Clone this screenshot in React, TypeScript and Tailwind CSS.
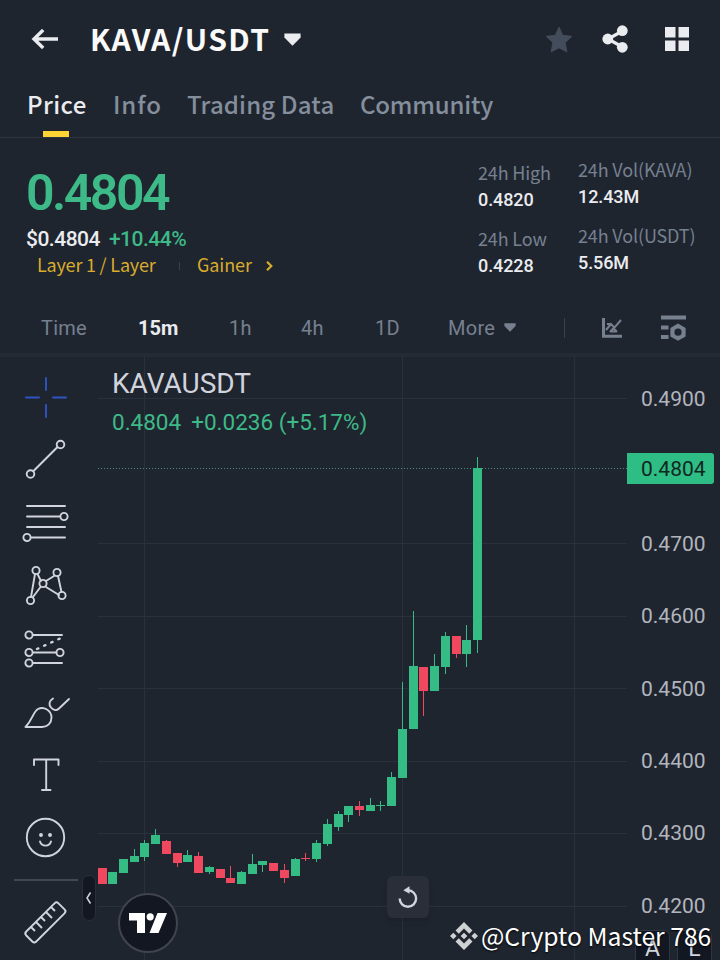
import clsx from "clsx";
import type { ReactNode } from "react";

type Candle = {
  up: boolean;
  high: number;
  top: number;
  bottom: number;
  low: number;
};

const c = (up: boolean, high: number, top: number, bottom: number, low: number): Candle => ({
  up,
  high,
  top,
  bottom,
  low,
});

const CANDLES: Candle[] = [
  c(false, 868, 868, 884, 884),
  c(true, 872, 872, 884, 884),
  c(true, 859, 859, 873, 873),
  c(true, 849, 856, 862, 862),
  c(true, 840, 843, 857, 861),
  c(true, 829, 835, 844, 844),
  c(false, 840, 841, 854, 854),
  c(false, 853, 853, 863, 867),
  c(true, 850, 855, 862, 862),
  c(false, 852, 856, 873, 873),
  c(true, 866, 867, 872, 874),
  c(false, 869, 869, 878, 878),
  c(false, 866, 878, 883, 883),
  c(true, 871, 872, 884, 884),
  c(true, 854, 864, 874, 874),
  c(true, 861, 861, 865, 872),
  c(false, 863, 863, 871, 871),
  c(false, 864, 870, 878, 883),
  c(true, 858, 859, 876, 876),
  c(false, 853, 858, 859, 861),
  c(true, 840, 843, 859, 862),
  c(true, 819, 824, 844, 846),
  c(true, 811, 814, 827, 831),
  c(true, 806, 806, 815, 822),
  c(false, 801, 806, 810, 816),
  c(true, 798, 805, 811, 811),
  c(true, 801, 805, 806, 811),
  c(true, 772, 777, 806, 806),
  c(true, 682, 729, 778, 778),
  c(true, 611, 666, 729, 729),
  c(false, 667, 667, 691, 716),
  c(true, 654, 666, 691, 691),
  c(true, 632, 636, 667, 674),
  c(false, 636, 636, 654, 658),
  c(true, 625, 640, 654, 667),
  c(true, 457, 468, 640, 653),
];

const GRID_Y = [398.5, 543.5, 616.5, 688.5, 761.5, 833.5, 906.5];
const GRID_X = [144.5, 402.5, 574.5];

const Caret = ({ className }: { className: string }) => (
  <svg className={className} viewBox="0 0 17 13" fill="currentColor">
    <path d="M.4.4h16.2v4L8.5 12.8.4 4.4z" />
  </svg>
);

const Header = () => (
  <header className="flex h-[78px] items-center pl-[31px] pr-[31px] text-[#eaecef]">
    <svg className="h-5 w-[27px]" viewBox="0 0 27 20" fill="none" stroke="currentColor" strokeWidth="3.4">
      <path d="M27 10H3M12.2 1 3 10l9.2 9" />
    </svg>
    <h1 className="ml-8 w-[180px] whitespace-nowrap pb-0.5 font-['Noto_Sans_CJK_SC'] text-[30px] font-bold leading-9 tracking-[1.4px] text-[#fafafa]">
      KAVA/USDT
    </h1>
    <Caret className="ml-[14px] h-[13px] w-[17px]" />
    <svg className="ml-auto h-[27px] w-7 text-[#434c5a]" viewBox="0 0 28 27" fill="currentColor">
      <path
        d="m14 1 3.7 8.4 9.1.9-6.7 6.2 1.8 9.4L14 21.8 6.1 25.9l1.8-9.4-6.7-6.2 9.1-.9z"
        stroke="currentColor"
        strokeLinejoin="round"
      />
    </svg>
    <svg className="ml-[29px] h-7 w-[27px]" viewBox="0 0 27 28" fill="currentColor">
      <path d="M20.5 6 6 14l14.5 8" fill="none" stroke="currentColor" strokeWidth="3.2" />
      <circle cx="20.3" cy="5.7" r="5.4" />
      <circle cx="5.8" cy="14" r="5.4" />
      <circle cx="20.3" cy="22.3" r="5.4" />
    </svg>
    <svg className="ml-9 h-6 w-6" viewBox="0 0 24 24" fill="currentColor">
      <path d="M0 0h10.5v10.5H0zM13.5 0H24v10.5H13.5zM0 13.5h10.5V24H0zM13.5 13.5H24V24H13.5z" />
    </svg>
  </header>
);

const Tabs = () => (
  <nav className="flex h-[60px] border-b border-[#2d343f] pl-[27px] font-['Noto_Sans_CJK_SC'] text-[24px] font-medium leading-[52px] whitespace-nowrap text-[#848e9c]">
    <div className="relative w-[60px] tracking-[0.4px] text-[#eaecef]">
      Price
      <span className="absolute bottom-0 left-4 h-1.5 w-[26px] bg-[#fcd535]" />
    </div>
    <div className="ml-[26px] w-[48px] tracking-[0.9px]">Info</div>
    <div className="ml-[26px] w-[147px] tracking-[0.15px]">Trading Data</div>
    <div className="ml-[26px] tracking-[-0.2px]">Community</div>
  </nav>
);

const Stat = ({ label, value }: { label: string; value: string }) => (
  <div className="h-[66px]">
    <div className="h-[26px] font-['Noto_Sans_CJK_SC'] text-[18px] leading-[22px] tracking-[-0.15px] text-[#76808f]">
      {label}
    </div>
    <div className="font-['Roboto'] text-[18px] font-medium leading-[26px] tracking-[-0.1px] text-[#eaecef]">
      {value}
    </div>
  </div>
);

const Summary = () => (
  <section className="flex h-[161px] whitespace-nowrap font-['Roboto']">
    <div className="w-[478px] pl-[26px] pt-[30px]">
      <div className="text-[50px] font-semibold leading-[50px] tracking-[-2.5px] text-[#3dba87]">0.4804</div>
      <div className="mt-2 flex gap-[9px] text-[21px] font-medium leading-[26px] tracking-[-0.5px]">
        <span className="text-[#eaecef]">$0.4804</span>
        <span className="text-[#3dba87]">+10.44%</span>
      </div>
      <div className="flex h-[28px] items-center pl-[11px] font-['Noto_Sans_CJK_SC'] text-[18px] leading-6 text-[#d9ac2e]">
        <span className="w-[119px] pb-1 tracking-[-0.2px]">Layer 1 / Layer</span>
        <span className="ml-[23px] h-2 w-px bg-[#39414d]" />
        <span className="ml-[17px] w-[55px] pb-1 tracking-[-0.1px]">Gainer</span>
        <svg className="ml-[14px] h-[10px] w-[7px]" viewBox="0 0 7 10" fill="none" stroke="currentColor" strokeWidth="2.2">
          <path d="m1 .8 4.3 4.2L1 9.2" />
        </svg>
      </div>
    </div>
    <div className="w-[100px] pt-[23px]">
      <Stat label="24h High" value="0.4820" />
      <Stat label="24h Low" value="0.4228" />
    </div>
    <div className="pt-5">
      <Stat label="24h Vol(KAVA)" value="12.43M" />
      <Stat label="24h Vol(USDT)" value="5.56M" />
    </div>
  </section>
);

const INTERVALS = [
  { label: "Time", width: "w-[97px]" },
  { label: "15m", width: "w-[91px]", active: true },
  { label: "1h", width: "w-[72px]" },
  { label: "4h", width: "w-[74px]" },
  { label: "1D", width: "w-[73px]" },
];

const IntervalBar = () => (
  <div className="flex h-[58px] items-center border-b-4 border-[#252b35] pl-[41px] pr-[34px] pt-[3px] font-['Roboto'] text-[20px] text-[#76808f]">
    {INTERVALS.map(({ label, width, active }) => (
      <span key={label} className={clsx(width, active ? "font-bold text-[#eaecef]" : "tracking-[0.2px]")}>
        {label}
      </span>
    ))}
    <span className="w-12 tracking-[0.3px]">More</span>
    <Caret className="ml-2 h-[9px] w-3" />
    <span className="ml-[48px] h-5 w-px bg-[#39414d]" />
    <svg className="ml-[37px] h-5 w-5" viewBox="0 0 20 20" fill="none" stroke="currentColor">
      <path d="M1.5 0v18.3H20" strokeWidth="3" />
      <path d="m4 12 5-6 3.4 3.6L19 2M5 6l3 0M8 14l3.5-4 3.5 4M9 13.5h5" strokeWidth="2" />
    </svg>
    <svg className="ml-auto h-[26px] w-[25px]" viewBox="0 0 25 26" fill="currentColor">
      <path d="M0 .5h25v4H0zM0 10.5h7.5v4H0zM0 20h7.5v4H0z" />
      <path
        fillRule="evenodd"
        d="m17 8.5 7.6 4.4v8.6L17 25.8l-7.6-4.3v-8.6zM17 13.6a3.6 3.6 0 1 0 0 7.2 3.6 3.6 0 0 0 0-7.2z"
      />
    </svg>
  </div>
);

const Tool = ({ children }: { children: ReactNode }) => (
  <svg
    className="h-[63px] w-[54px]"
    viewBox="0 0 54 63"
    fill="none"
    stroke="currentColor"
    strokeWidth="1.9"
    strokeLinecap="round"
    strokeLinejoin="round"
  >
    {children}
  </svg>
);

const Toolbar = () => (
  <aside className="relative flex w-[98px] flex-col pl-[19px] pt-[9px] text-[#d1d4dc]">
    <Tool>
      <path stroke="#2f55c4" d="M27 12v12M27 39v12M7 31.5h13M34 31.5h13" />
    </Tool>
    <Tool>
      <path d="M14.5 42 38.5 18" />
      <circle cx="11.5" cy="45" r="3.8" />
      <circle cx="41.5" cy="15.5" r="3.8" />
    </Tool>
    <Tool>
      <path d="M8 14h38M8 24.5h33M8 35h38M12 45.5h34" />
      <circle cx="45" cy="24.5" r="3.6" />
      <circle cx="8" cy="45.5" r="3.6" />
    </Tool>
    <Tool>
      <path d="m16 19-4 23M18.5 19l3.5 7M14 42l7.5-10M27 26l8-5M27 32l13 8M39 21l3.5 16" />
      <circle cx="17" cy="15.5" r="3.6" />
      <circle cx="38" cy="17.5" r="3.6" />
      <circle cx="24" cy="28.5" r="3.6" />
      <circle cx="11.5" cy="45.5" r="3.6" />
      <circle cx="43" cy="40.5" r="3.6" />
    </Tool>
    <Tool>
      <path d="M14 17h29M14 34.5h23.5M14 45h29" />
      <path d="m18 31 24-11" strokeWidth="2.4" strokeDasharray="1.5 6.3" />
      <circle cx="10" cy="17" r="3.6" />
      <circle cx="10" cy="34.5" r="3.6" />
      <circle cx="41" cy="34.5" r="3.6" />
      <circle cx="10" cy="45" r="3.6" />
    </Tool>
    <Tool>
      <path d="M6.5 46C14 38 14 31 19 28c6-3 13.500 1.500 13.500 8.500 0 5.500-4 9.500-9.500 9.500z" />
      <path d="M34 17.500c-4 2.500-4.500 6-2 9 2.500 3 5.500 3.500 8 1L50 18" />
    </Tool>
    <Tool>
      <path d="M15 21v-5.500h24.500V21M27.200 15.500V46M23 46h8.500" />
    </Tool>
    <Tool>
      <circle cx="26.500" cy="30.500" r="18.700" />
      <path d="M21 34.500c1.500 5.500 9.500 5.500 11 0" />
      <circle cx="22" cy="28" r="1" fill="currentColor" />
      <circle cx="31" cy="28" r="1" fill="currentColor" />
    </Tool>
    <div className="-ml-[5px] mt-[9px] h-0.5 w-[64px] bg-[#434954]" />
    <svg
      className="mt-[20px] h-[44px] w-[54px]"
      viewBox="0 0 54 44"
      fill="none"
      stroke="currentColor"
      strokeWidth="1.900"
      strokeLinejoin="round"
    >
      <path d="M7.300 30.500 35.500 2.300c1.500-1.500 2.500-1.500 4 0l6 6c1.500 1.500 1.500 2.500 0 4L17.300 40.500c-1.500 1.500-2.500 1.500-4 0l-6-6c-1.500-1.500-1.500-2.500 0-4zM12 26l4 4M17 21l6 6M22 16l4 4M27 11l6 6M32 6l4 4" />
    </svg>
    <div className="absolute left-[82px] top-[518px] flex h-[46px] w-[14px] items-center justify-center rounded-[7px] border border-[#2a2e39] bg-[#131722]">
      <svg className="h-3 w-[6px]" viewBox="0 0 6 12" fill="none" stroke="currentColor" strokeWidth="1.500">
        <path d="M4.500.5 1 6l3.500 5.500" />
      </svg>
    </div>
  </aside>
);

const Chart = () => (
  <div className="relative w-[529px]">
    <svg className="h-[603px] w-[529px]" viewBox="98 357 529 603">
      <g stroke="#2a313b">
        {GRID_Y.map((y) => (
          <path key={y} d={`M98 ${y}H627`} />
        ))}
        {GRID_X.map((x) => (
          <path key={x} d={`M${x} 357V960`} />
        ))}
      </g>
      <path d="M98 468.500H627" stroke="#4f8f83" strokeDasharray="1 2" />
      {CANDLES.map(({ up, high, top, bottom, low }, i) => {
        const x = Math.round(101.500 + i * 10.730);
        return (
          <g key={i} fill={up ? "#35bb84" : "#f0495f"}>
            <rect x={x} y={high} width="1" height={low - high} />
            <rect x={x - 4} y={top} width="9" height={bottom - top} />
          </g>
        );
      })}
    </svg>
    <div className="absolute left-[14px] top-[11px] whitespace-nowrap font-['Roboto']">
      <div className="text-[28px] leading-8 text-[#d1d4dc]">KAVAUSDT</div>
      <div className="mt-2 flex gap-[10px] text-[22.500px] leading-7 text-[#3dba87]">
        <span>0.4804</span>
        <span>+0.0236 (+5.17%)</span>
      </div>
    </div>
    <div className="absolute left-5 top-[536px] flex h-[60px] w-[60px] items-center justify-center rounded-full border-2 border-[#41444e] bg-[#131722]">
      <svg className="h-5 w-[38px]" viewBox="0 0 38 20" fill="#fff">
        <path d="M0 0h16v20H8V7.500H0zM28.500 0H38l-8.500 20H20.500z" />
        <circle cx="21.200" cy="3.800" r="3.600" />
      </svg>
    </div>
    <div className="absolute left-[289px] top-[519px] flex h-[42px] w-[42px] items-center justify-center rounded-md bg-[#2a2e39] shadow-md">
      <svg className="h-[22px] w-[20px] text-[#d1d4dc]" viewBox="0 0 20 22" fill="none">
        <path d="M1.700 12.500a8.200 8.200 0 1 0 8.300-8.200" stroke="currentColor" strokeWidth="2.400" />
        <path d="M11.500.3v7.400L5.300 4.200z" fill="currentColor" />
      </svg>
    </div>
  </div>
);

const PRICES = ["0.4900", "0.4804", "0.4700", "0.4600", "0.4500", "0.4400", "0.4300", "0.4200"];

const PriceAxis = () => (
  <div className="flex w-[93px] flex-col pt-[6.500px] font-['Roboto'] text-[21px] text-[#b2b5be]">
    {PRICES.map((price) => (
      <div key={price} className="flex h-[72.400px] shrink-0 items-center">
        {price === "0.4804" ? (
          <span className="mb-2 h-[31px] w-[87px] rounded-r-[3px] bg-[#2ebd85] pl-[14px] leading-[32px] text-[#10261f]">
            {price}
          </span>
        ) : (
          <span className="pl-[14px]">{price}</span>
        )}
      </div>
    ))}
    <div className="-mt-[13px] flex gap-[7px] pl-2 text-center text-[23px] leading-[36px] text-[#d1d4dc]">
      <span className="h-10 w-[35px] rounded-md border border-[#2f3541] bg-[#131722]">A</span>
      <span className="h-10 w-[35px] rounded-md border border-[#2f3541] bg-[#131722]">L</span>
    </div>
  </div>
);

const Watermark = () => (
  <div className="absolute bottom-[10px] left-[450px] flex items-center whitespace-nowrap font-['Noto_Sans_CJK_SC'] text-[24.700px] leading-6 text-white [text-shadow:0_1px_2px_#000]">
    <svg className="h-7 w-7" viewBox="0 0 28 28" fill="#d0d1d2">
      <path d="m14 0 8.500 8.500-3.300 3.300L14 6.600l-5.200 5.200-3.300-3.300zM3.300 10.700 6.600 14l-3.300 3.300L0 14zM24.700 10.700 28 14l-3.300 3.300-3.300-3.300zM14 10.700l3.300 3.300-3.300 3.300-3.300-3.300zM8.800 16.200l5.200 5.200 5.200-5.200 3.300 3.300L14 28l-8.500-8.500z" />
    </svg>
    <span className="ml-[3px] pb-[3px]">@Crypto Master 786</span>
  </div>
);

export default function App() {
  return (
    <div className="relative h-[960px] w-[720px] overflow-hidden bg-[#1f252f]">
      <Header />
      <Tabs />
      <Summary />
      <IntervalBar />
      <main className="flex h-[603px]">
        <Toolbar />
        <Chart />
        <PriceAxis />
      </main>
      <Watermark />
    </div>
  );
}
